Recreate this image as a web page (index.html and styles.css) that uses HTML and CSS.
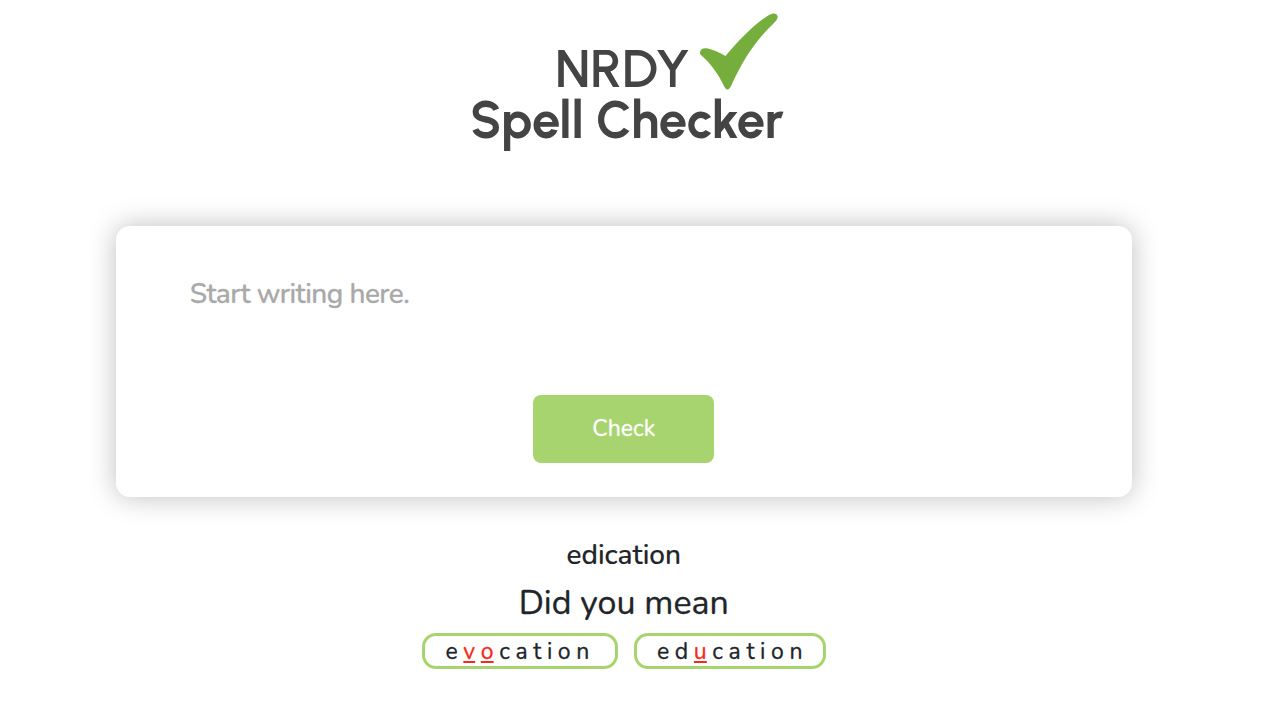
FILE: index.html
```html
<!DOCTYPE html>
<html lang="en">
<head>
  <meta charset="UTF-8">
  <meta name="viewport" content="width=device-width, initial-scale=1.0">
  <title>NRDY Spell Checker</title>
  <link rel="stylesheet" href="styles.css">
</head>
<body>
  <div class="page">
    <header class="header">
      <svg class="logo" width="340" height="160" viewBox="0 0 340 160" role="img" aria-label="NRDY Spell Checker">
        <text class="logo-text logo-top" x="95" y="87" textLength="135" lengthAdjust="spacingAndGlyphs">NRDY</text>
        <text class="logo-text" x="10" y="138" textLength="314" lengthAdjust="spacingAndGlyphs">Spell Checker</text>
        <path class="logo-check" d="M240 52 C241 48 244 48 248 48.500 C255 50 260 53 265.500 56 C277 42 295 23 309 15 C313 12.500 317 13 317.500 16 C318 18 317 20 314 23 C295 41 283 60 271 86 C269 90 267 91 264.500 87 C258 73 250 63 242 56 C240 54 239.500 53.500 240 52 Z"/>
      </svg>
    </header>

    <form class="checker">
      <textarea class="input" id="textInput" placeholder="Start writing here."></textarea>
      <button class="check-button" type="button">Check</button>
    </form>

    <section class="results">
      <p class="word">edication</p>
      <h2 class="title">Did you mean</h2>
      <div class="suggestions">
        <div class="suggestion first">
          <span>e</span><span class="diff">v</span><span class="diff">o</span><span>c</span><span>a</span><span>t</span><span>i</span><span>o</span><span>n</span>
        </div>
        <div class="suggestion">
          <span>e</span><span>d</span><span class="diff">u</span><span>c</span><span>a</span><span>t</span><span>i</span><span>o</span><span>n</span>
        </div>
      </div>
    </section>
  </div>
</body>
</html>
```
FILE: styles.css
```css
* {
  margin: 0;
  padding: 0;
  box-sizing: border-box;
}

body {
  font-family: Nunito, Lato, sans-serif;
  background: #fff;
  color: #212529;
  overflow: hidden;
}

.page {
  width: 1247.5px;
  display: flex;
  flex-direction: column;
  align-items: center;
}

.header {
  height: 226px;
  padding-left: 12.5px;
}

.logo {
  display: block;
}

.logo-text {
  font-family: Gilroy, Urbanist, Figtree, Outfit, Montserrat, Nunito, Lato, sans-serif;
  font-size: 52px;
  font-weight: 700;
  fill: #444;
}

.logo-top {
  font-weight: 600;
}

.logo-check {
  fill: #76ae3e;
}

.checker {
  width: 1016px;
  height: 271px;
  padding: 50px 74px 34px;
  display: flex;
  flex-direction: column;
  align-items: center;
  justify-content: space-between;
  border-radius: 14px;
  background: #fff;
  box-shadow: 0 0 28px rgba(0, 0, 0, 0.26);
}

.input {
  width: 100%;
  height: 80px;
  border: none;
  outline: none;
  resize: none;
  background: transparent;
  font-family: inherit;
  font-size: 28px;
  font-weight: 500;
  line-height: 36px;
  letter-spacing: -0.57px;
}

.input::placeholder {
  color: #a9a9a9;
  -webkit-text-stroke: 0.3px #a9a9a9;
}

.check-button {
  width: 181px;
  height: 68px;
  padding-bottom: 2px;
  border: none;
  border-radius: 8px;
  background: #a8d46f;
  color: #fff;
  font-family: inherit;
  font-size: 23px;
  -webkit-text-stroke: 0.3px #fff;
  cursor: pointer;
}

.results {
  padding-top: 38px;
  text-align: center;
}

.word {
  font-size: 28px;
  font-weight: 500;
  line-height: 40px;
  -webkit-text-stroke: 0.2px #212529;
}

.title {
  margin-top: 8px;
  font-size: 34px;
  font-weight: 400;
  line-height: 40px;
  -webkit-text-stroke: 0.3px #212529;
}

.suggestions {
  display: flex;
  justify-content: center;
  gap: 16px;
  margin-top: 10px;
}

.suggestion {
  width: 192px;
  height: 36px;
  padding: 2px 0 0 20.5px;
  display: flex;
  align-items: center;
  gap: 5.6px;
  border: 3px solid #a8d46f;
  border-radius: 14px;
  font-size: 23px;
  line-height: 30px;
  -webkit-text-stroke: 0.3px;
}

.suggestion.first {
  width: 195.5px;
}

.diff {
  color: #f52a1c;
  text-decoration: underline;
  text-decoration-thickness: 2px;
  text-underline-offset: 2px;
}
```
